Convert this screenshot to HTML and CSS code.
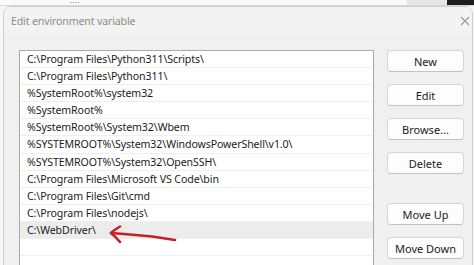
FILE: index.html
```html
<!DOCTYPE html>
<html lang="en">
<head>
    <meta charset="UTF-8">
    <title>Edit environment variable</title>
    <link rel="stylesheet" href="styles.css">
</head>
<body>
    <div class="backdrop">
        <span class="backdrop-dots">• • • •</span>
        <span class="backdrop-tab"></span>
        <span class="backdrop-dark"></span>
    </div>
    <div class="dialog">
        <div class="titlebar">
            <span class="title">Edit environment variable</span>
            <svg class="close" width="10" height="10" viewBox="0 0 10 10">
                <path d="M1 1 L9 9 M9 1 L1 9" stroke="#9a9a9a" stroke-width="1.1" fill="none"/>
            </svg>
        </div>
        <div class="content">
            <div class="list">
                <div class="row">C:\Program Files\Python311\Scripts\</div>
                <div class="row">C:\Program Files\Python311\</div>
                <div class="row">%SystemRoot%\system32</div>
                <div class="row">%SystemRoot%</div>
                <div class="row">%SystemRoot%\System32\Wbem</div>
                <div class="row">%SYSTEMROOT%\System32\WindowsPowerShell\v1.0\</div>
                <div class="row">%SYSTEMROOT%\System32\OpenSSH\</div>
                <div class="row">C:\Program Files\Microsoft VS Code\bin</div>
                <div class="row">C:\Program Files\Git\cmd</div>
                <div class="row">C:\Program Files\nodejs\</div>
                <div class="row selected">C:\WebDriver\</div>
                <div class="row"></div>
                <div class="row"></div>
                <svg class="arrow" width="76" height="22" viewBox="0 0 76 22">
                    <path d="M3 8 L22 9.5 L44 11.5 L67 15" fill="none" stroke="#c81e28" stroke-width="2.6" stroke-linecap="round" stroke-linejoin="round"/>
                    <path d="M12 1.5 Q6 5 3 8 Q8 12 12 17" fill="none" stroke="#c81e28" stroke-width="2.6" stroke-linecap="round" stroke-linejoin="round"/>
                </svg>
            </div>
            <div class="buttons">
                <button>New</button>
                <button>Edit</button>
                <button>Browse...</button>
                <button>Delete</button>
                <button class="gap-before">Move Up</button>
                <button>Move Down</button>
            </div>
        </div>
    </div>
</body>
</html>
```

FILE: styles.css
```css
:root {
    --dialog-bg: #f0f0f0;
    --title-bg: #f3f3f3;
    --text-color: #1b1b1b;
    --border-color: #a9a9a9;
}
html, body {
    margin: 0;
    padding: 0;
}
body {
    width: 474px;
    height: 265px;
    overflow: hidden;
    background: #f7f7f7;
    font-family: 'Noto Sans', sans-serif;
    color: var(--text-color);
}
.backdrop {
    height: 5px;
    display: flex;
    align-items: flex-start;
    border-bottom: 1px solid #d6d6d6;
    background: #fafafa;
}
.backdrop-dots {
    margin-left: 70px;
    font-size: 4px;
    line-height: 5px;
    color: #555;
}
.backdrop-tab {
    margin-left: auto;
    width: 40px;
    height: 5px;
    background: #e6e6e6;
}
.backdrop-dark {
    width: 27px;
    height: 5px;
    background: #1e1e1e;
}
.dialog {
    margin-left: 3px;
    width: 468px;
    height: 270px;
    border: 1px solid #cfcfcf;
    border-radius: 8px 8px 0 0;
    background: var(--dialog-bg);
    overflow: hidden;
}
.titlebar {
    height: 28px;
    display: flex;
    align-items: center;
    justify-content: space-between;
    padding: 0 2px 0 7px;
    background: var(--title-bg);
}
.title {
    font-size: 10.6px;
    letter-spacing: -0.15px;
    color: #8c8c8c;
}
.close {
    margin-top: -1px;
}
.content {
    display: flex;
    align-items: flex-start;
    padding: 15px 0 0 15px;
}
.list {
    position: relative;
    width: 353px;
    border: 1px solid var(--border-color);
    border-bottom: none;
    background: #ffffff;
}
.row {
    height: 16.1px;
    padding-left: 7px;
    border-bottom: 1px solid #efefef;
    font-size: 10.6px;
    letter-spacing: -0.1px;
    line-height: 16px;
    white-space: nowrap;
}
.row.selected {
    background: #ececec;
}
.arrow {
    position: absolute;
    left: 88px;
    top: 174px;
}
.buttons {
    display: flex;
    flex-direction: column;
    gap: 12px;
    margin-left: 13px;
}
button {
    width: 77px;
    height: 22px;
    padding: 0;
    font-family: inherit;
    font-size: 11px;
    color: var(--text-color);
    background: #fdfdfd;
    border: 1px solid #d5d5d5;
    border-bottom-color: #c2c2c2;
    border-radius: 4px;
}
.gap-before {
    margin-top: 17px;
}
```
